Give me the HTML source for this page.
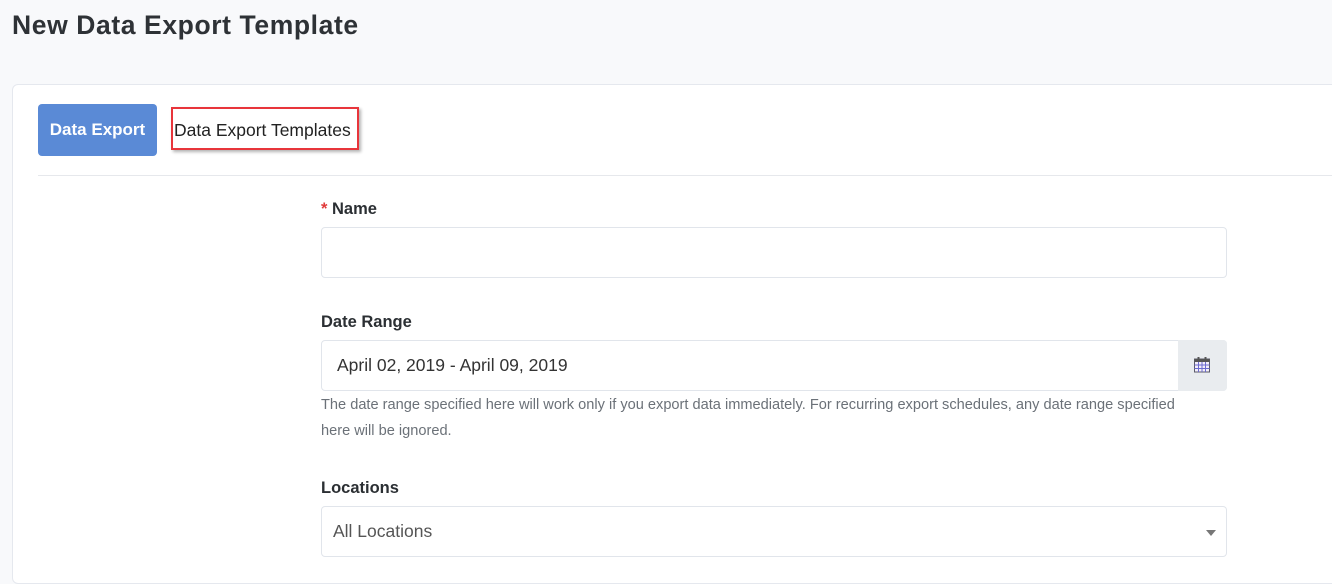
<!DOCTYPE html>
<html><head><style>
*{box-sizing:border-box;margin:0;padding:0}
body{width:1332px;height:569px;overflow:hidden;background:#f8f9fb;font-family:"Liberation Sans",sans-serif;color:#2b2f33;position:relative}
h1{position:absolute;left:12px;top:10px;font-size:26.5px;font-weight:bold;color:#2e3236;letter-spacing:0.6px}
.card{position:absolute;left:12px;top:84px;width:1340px;height:500px;background:#fff;border:1px solid #e5e8ee;border-radius:6px}
.btn{position:absolute;left:38px;top:104px;width:119px;height:52px;background:#5a8ad6;border-radius:4px;color:#fff;font-weight:bold;font-size:17px;line-height:52px;text-align:center}
.tab{position:absolute;left:171px;top:107px;width:188px;height:43px;border:2px solid #e8353b;box-shadow:2px 2px 3px rgba(0,0,0,.3);font-size:17.5px;line-height:42px;padding-left:1px;color:#222}
.hr{position:absolute;left:38px;top:175px;width:1300px;height:1px;background:#e6e8ec}
.lbl{position:absolute;left:321px;font-weight:bold;font-size:16.5px;color:#2b2f33}
.inp{position:absolute;left:321px;width:906px;height:51px;border:1px solid #e1e5eb;border-radius:4px;background:#fff;font-size:17.5px;line-height:49px;color:#333}
.help{position:absolute;left:321px;top:392px;width:900px;font-size:14.6px;line-height:26px;color:#6b7178;white-space:nowrap}
</style></head><body>
<h1>New Data Export Template</h1>
<div class="card"></div>
<div class="btn">Data Export</div>
<div class="tab">Data Export Templates</div>
<div class="hr"></div>
<div class="lbl" style="top:200px"><span style="color:#e03a3a">*</span> Name</div>
<div class="inp" style="top:227px"></div>
<div class="lbl" style="top:313px">Date Range</div>
<div class="inp" style="top:340px;padding-left:15px">April 02, 2019 - April 09, 2019
<div style="position:absolute;right:-1px;top:-1px;width:49px;height:51px;background:#e9ecef;border-radius:0 4px 4px 0">
<svg width="18" height="18" viewBox="0 0 18 18" style="position:absolute;left:15px;top:16px"><rect x="1.5" y="3" width="15" height="13" fill="#f3eefa" stroke="#5a5a6a"/><rect x="1.5" y="3" width="15" height="3" fill="#555"/><path d="M1.5 9h15M1.5 12.5h15M5.5 6v10M9 6v10M12.5 6v10" stroke="#6b6bd0" stroke-width="1"/><rect x="4.5" y="1" width="2" height="4" fill="#555"/><rect x="11.5" y="1" width="2" height="4" fill="#555"/></svg>
</div></div>
<div class="help">The date range specified here will work only if you export data immediately. For recurring export schedules, any date range specified<br>here will be ignored.</div>
<div class="lbl" style="top:479px">Locations</div>
<div class="inp" style="top:506px;padding-left:11px;color:#555">All Locations
<svg width="10" height="6" style="position:absolute;right:10px;top:23px"><path d="M0 0h10L5 6z" fill="#777"/></svg></div>
</body></html>
